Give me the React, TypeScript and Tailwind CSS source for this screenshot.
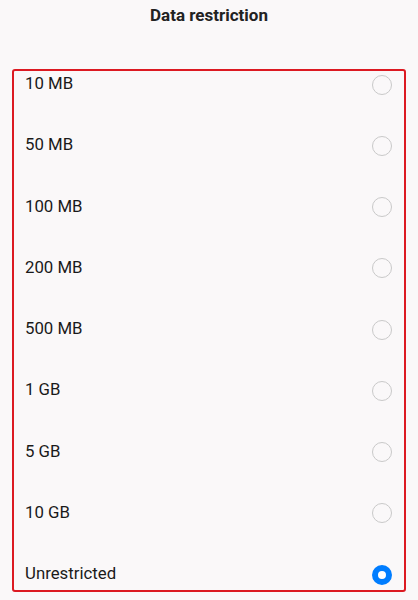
import React from "react";

const items = ["10 MB", "50 MB", "100 MB", "200 MB", "500 MB", "1 GB", "5 GB", "10 GB", "Unrestricted"];

export default function App() {
  return (
    <div
      className="relative w-[418px] h-[600px] overflow-hidden bg-[#faf8f9] text-[#1a1a1a]"
      style={{ fontFamily: "Roboto, 'Noto Sans', sans-serif" }}
    >
      <div className="h-[53px] pt-[4px] flex justify-center">
        <span className="text-[17px] font-bold leading-[22px] text-[#222]">Data restriction</span>
      </div>
      <div className="flex flex-col">
        {items.map((label, i) => {
          const selected = i === items.length - 1;
          return (
            <div key={label} className="h-[61.25px] shrink-0 flex items-center justify-between pl-[25px] pr-[26px]">
              <span className="text-[16.8px] leading-none">{label}</span>
              {selected ? (
                <span className="w-[20px] h-[20px] rounded-full border-[6.5px] border-[#007dff] bg-white box-border translate-y-[1px]" />
              ) : (
                <span className="w-[20px] h-[20px] rounded-full border border-[#c9c9c9] box-border translate-y-[1px]" />
              )}
            </div>
          );
        })}
      </div>
      <div className="absolute left-[12px] top-[69px] w-[394px] h-[523px] border-2 border-[#dc1a22] rounded-[3px] pointer-events-none" />
    </div>
  );
}
